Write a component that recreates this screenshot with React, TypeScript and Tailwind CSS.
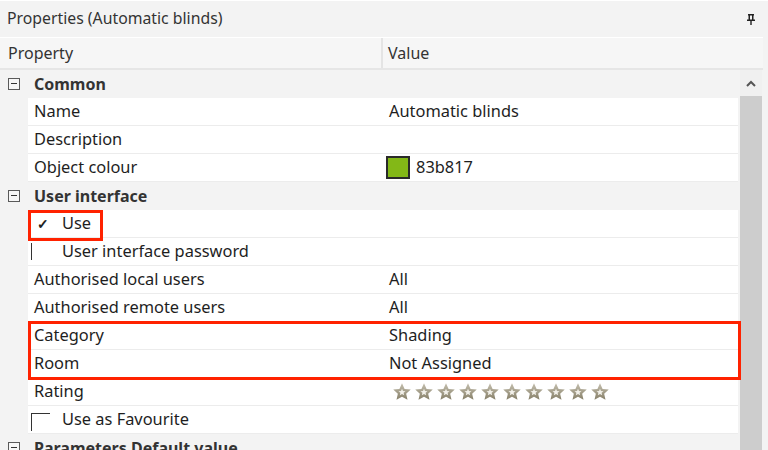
import React from "react";

const font = { fontFamily: '"Noto Sans", "Open Sans", sans-serif' };

function GroupRow({ label }: { label: string }) {
  return (
    <div className="flex h-[28px] items-center bg-[#f3f3f3]">
      <div className="flex w-[28px] shrink-0 items-center justify-center">
        <div className="relative h-[12px] w-[12px] border border-[#5a5a5a] bg-[#f7f7f7]">
          <div className="absolute left-[2px] top-[4px] h-[1px] w-[6px] bg-[#333]" />
        </div>
      </div>
      <div className="pl-[6px] text-[16px] font-bold text-[#333]">{label}</div>
    </div>
  );
}

function ItemRow({
  label,
  value,
  indentCheck,
}: {
  label: React.ReactNode;
  value?: React.ReactNode;
  indentCheck?: React.ReactNode;
}) {
  return (
    <div className="flex h-[28px]">
      <div className="w-[28px] shrink-0 bg-[#f3f3f3]" />
      <div className="flex flex-1 border-b border-[#ececec] bg-white">
        <div className="flex w-[355px] shrink-0 items-center pl-[6px] text-[16.4px] text-[#1e1e1e]">
          {indentCheck}
          {label}
        </div>
        <div className="flex flex-1 items-center pl-[6px] text-[16.4px] text-[#1e1e1e]">{value}</div>
      </div>
    </div>
  );
}

function Star() {
  return (
    <svg width="20" height="20" viewBox="0 0 24 24">
      <defs>
        <linearGradient id="sg" x1="0" y1="0" x2="0" y2="1">
          <stop offset="0" stopColor="#c4bfae" />
          <stop offset="1" stopColor="#878069" />
        </linearGradient>
      </defs>
      <path
        d="M12 1.5l3.1 6.8 7.4.8-5.5 5 1.6 7.3L12 17.6l-6.6 3.8 1.6-7.3-5.5-5 7.4-.8z"
        fill="url(#sg)"
      />
      <path
        d="M12 8l1.2 2.7 3 .3-2.3 2 .7 2.9L12 14.4l-2.6 1.5.7-2.9-2.3-2 3-.3z"
        fill="#f2f0e9"
      />
    </svg>
  );
}

export default function App() {
  return (
    <div className="flex h-[450px] w-[768px] flex-col overflow-hidden bg-[#f3f3f3]" style={font}>
      <div className="flex h-[37px] shrink-0 items-center justify-between border-t border-white pl-[7px] pr-[12px]">
        <span className="text-[15.8px] text-[#333]">Properties (Automatic blinds)</span>
        <svg width="10" height="12" viewBox="0 0 10 12">
          <rect x="2" y="1" width="6" height="1.5" fill="#222" />
          <rect x="2.5" y="1" width="1.5" height="6" fill="#222" />
          <rect x="6" y="1" width="1.5" height="6" fill="#222" />
          <rect x="1" y="6.5" width="8" height="1.5" fill="#222" />
          <rect x="4.3" y="8" width="1.4" height="4" fill="#222" />
        </svg>
      </div>
      <div className="mr-[5px] flex h-[33px] shrink-0 border-b-2 border-t border-b-[#e6e6e6] border-t-white bg-[#f6f6f6]">
        <div className="flex w-[383px] items-center border-r-2 border-[#e4e4e4] pl-[8px] text-[16px] text-[#333]">
          Property
        </div>
        <div className="flex flex-1 items-center pl-[5px] text-[16px] text-[#333]">Value</div>
      </div>
      <div className="relative flex flex-1">
        <div className="flex w-[738px] shrink-0 flex-col">
          <GroupRow label="Common" />
          <ItemRow label="Name" value="Automatic blinds" />
          <ItemRow label="Description" />
          <ItemRow
            label="Object colour"
            value={
              <div className="-ml-[3px] flex items-center">
                <div className="h-[23px] w-[24px] border-2 border-[#2a2a2a] bg-[#83b817]" />
                <span className="ml-[6px]">83b817</span>
              </div>
            }
          />
          <GroupRow label="User interface" />
          <ItemRow
            label="Use"
            indentCheck={
              <span className="ml-[3px] mr-[12px] w-[13px] text-[14px] font-bold leading-none text-[#222]">✓</span>
            }
          />
          <ItemRow
            label="User interface password"
            indentCheck={<span className="-ml-[3px] mr-[30px] h-[17px] w-[1px] bg-[#333]" />}
          />
          <ItemRow label="Authorised local users" value="All" />
          <ItemRow label="Authorised remote users" value="All" />
          <ItemRow label="Category" value="Shading" />
          <ItemRow label="Room" value="Not Assigned" />
          <ItemRow
            label="Rating"
            value={
              <div className="ml-[3px] flex gap-[2px]">
                {Array.from({ length: 10 }).map((_, i) => (
                  <Star key={i} />
                ))}
              </div>
            }
          />
          <ItemRow
            label="Use as Favourite"
            indentCheck={
              <span className="-ml-[3px] mr-[12px] mt-[4px] h-[18px] w-[19px] border-l border-t border-[#333]" />
            }
          />
          <GroupRow label="Parameters Default value" />
        </div>
        <div className="ml-[2px] flex w-[22px] shrink-0 flex-col">
          <div className="flex h-[26px] items-center justify-center bg-[#f0f0f0]">
            <svg width="10" height="7" viewBox="0 0 10 7">
              <path d="M1 6l4-4 4 4" stroke="#555" strokeWidth="2" fill="none" />
            </svg>
          </div>
          <div className="flex-1 bg-[#cdcdcd]" />
        </div>
        <div className="pointer-events-none absolute left-[28px] top-[140px] h-[31px] w-[75px] border-[3px] border-[#ff2200]" />
        <div className="pointer-events-none absolute left-[28px] top-[251px] h-[59px] w-[713px] border-[3px] border-[#ff2200]" />
      </div>
    </div>
  );
}
